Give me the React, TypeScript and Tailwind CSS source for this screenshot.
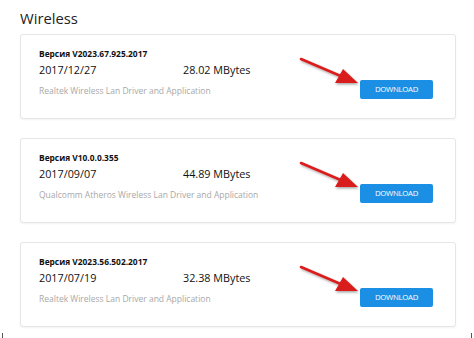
const drivers = [
  {
    version: "Версия V2023.67.925.2017",
    date: "2017/12/27",
    size: "28.02 MBytes",
    desc: "Realtek Wireless Lan Driver and Application",
  },
  {
    version: "Версия V10.0.0.355",
    date: "2017/09/07",
    size: "44.89 MBytes",
    desc: "Qualcomm Atheros Wireless Lan Driver and Application",
  },
  {
    version: "Версия V2023.56.502.2017",
    date: "2017/07/19",
    size: "32.38 MBytes",
    desc: "Realtek Wireless Lan Driver and Application",
  },
];

function RedArrow() {
  // annotation arrow drawn over the card
  return (
    <svg
      className="pointer-events-none absolute left-[278px] top-[22px]"
      width="64"
      height="34"
      viewBox="0 0 64 34"
    >
      <defs>
        <filter id="sh" x="-20%" y="-20%" width="150%" height="160%">
          <feDropShadow dx="1" dy="1.5" stdDeviation="1" floodColor="#000" floodOpacity="0.35" />
        </filter>
      </defs>
      <g filter="url(#sh)">
        <line x1="2" y1="2" x2="44" y2="20" stroke="#d91f1f" strokeWidth="2.6" strokeLinecap="round" />
        <polygon points="59,26 36,26 44,12" fill="#d91f1f" />
      </g>
    </svg>
  );
}

function DriverCard({ d }: { d: (typeof drivers)[number] }) {
  return (
    <div className="relative flex h-[85px] w-[436px] items-start justify-between rounded-[3px] border border-[#e6e6e6] bg-white pl-[18px] pr-[22px] pt-[12px] shadow-[0_1px_2px_rgba(0,0,0,0.05)]">
      <div className="flex flex-col">
        <div className="text-[8.4px] font-bold leading-[14px] text-[#111]">{d.version}</div>
        <div className="flex text-[10.8px] leading-[18px] text-[#111]">
          <span className="w-[144px]">{d.date}</span>
          <span>{d.size}</span>
        </div>
        <div className="mt-[6px] text-[8.5px] leading-[12px] text-[#a8a8a8]">{d.desc}</div>
      </div>
      <button className="mt-[33px] flex h-[19px] w-[73px] items-center justify-center rounded-[2px] bg-[#1a8fe3] text-[7.8px] tracking-[-0.3px] text-white">
        DOWNLOAD
      </button>
      <RedArrow />
    </div>
  );
}

export default function App() {
  return (
    <div
      className="flex h-[338px] w-[474px] flex-col bg-white pl-[20px] pt-[7px]"
      style={{ fontFamily: '"Open Sans", "Noto Sans", sans-serif' }}
    >
      <h2 className="text-[14.8px] leading-[22px] text-[#222]">Wireless</h2>
      <div className="mt-[5px] flex flex-col gap-[19px]">
        {drivers.map((d) => (
          <DriverCard key={d.version} d={d} />
        ))}
      </div>
      <div className="-ml-[18px] mt-[6px] flex w-[470px] justify-between">
        <div className="h-[5px] w-px bg-[#555]" />
        <div className="h-[5px] w-px bg-[#555]" />
      </div>
    </div>
  );
}
